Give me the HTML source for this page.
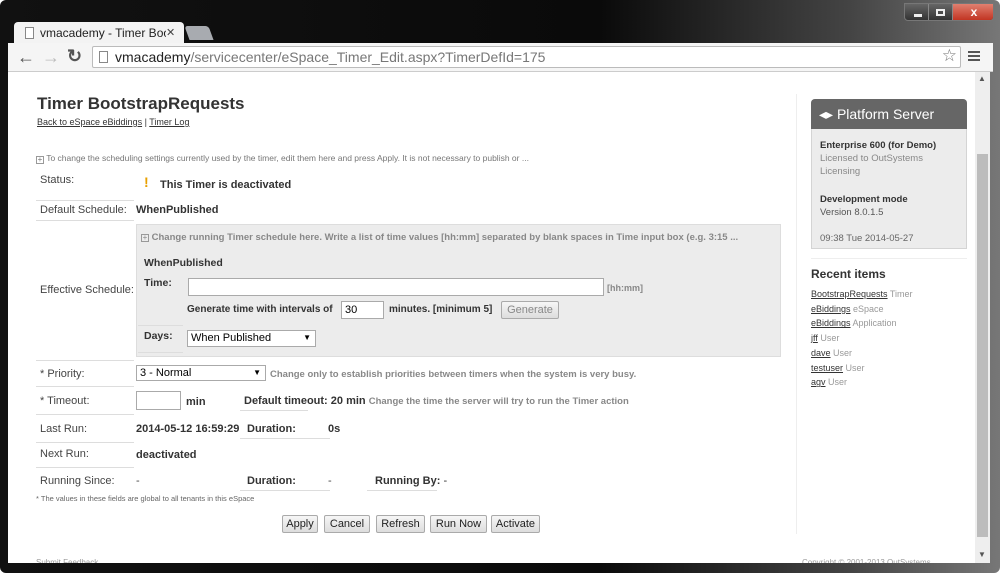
<!DOCTYPE html>
<html><head><style>
*{box-sizing:border-box;margin:0;padding:0}
body{width:1000px;height:573px;overflow:hidden;background:#fff;font-family:"Liberation Sans",Arial,sans-serif;position:relative}
.a{position:absolute}
.frame{left:0;top:0;width:1000px;height:573px;background:linear-gradient(90deg,#111 0,#0a0a0a 60%,#444 85%,#777 100%);border-radius:6px}
.lbl{font-size:11px;color:#444}
.b{font-weight:bold;font-size:11px;color:#333}
.line{height:1px;background:#ddd}
.btn{position:absolute;height:18px;border:1px solid #aaa;background:linear-gradient(#f6f6f6,#ddd);font-size:11px;color:#222;text-align:center;line-height:16px;border-radius:2px}
.inp{position:absolute;background:#fff;border:1px solid #aaa}
.u{text-decoration:underline;color:#333}
.g{color:#888}
</style></head><body>
<div class="a frame"></div>
<div class="a" style="left:904px;top:3px;width:90px;height:18px;border:1px solid #777;border-radius:0 0 4px 4px;background:linear-gradient(#666,#333);overflow:hidden">
 <div class="a" style="left:0;top:0;width:24px;height:17px;border-right:1px solid #888"></div>
 <div class="a" style="left:9px;top:10px;width:8px;height:3px;background:#eee"></div>
 <div class="a" style="left:24px;top:0;width:24px;height:17px;border-right:1px solid #888"></div>
 <div class="a" style="left:31px;top:5px;width:9px;height:7px;border:2px solid #eee"></div>
 <div class="a" style="left:48px;top:0;width:42px;height:17px;background:linear-gradient(#e08070,#c0301e);color:#fff;font-weight:bold;font-size:12px;text-align:center;line-height:17px">x</div>
</div>
<div class="a" style="left:14px;top:22px;width:170px;height:22px;background:#f3f3f3;border-radius:4px 4px 0 0;font-size:12px;color:#222;line-height:22px;padding-left:26px;overflow:hidden;white-space:nowrap">
 <div class="a" style="left:26px;top:0;width:126px;overflow:hidden">vmacademy - Timer Boots</div>
 <span style="position:absolute;left:152px;color:#444;font-size:11px">✕</span>
 <div class="a" style="left:11px;top:5px;width:9px;height:12px;border:1px solid #888;background:#fff"></div></div>
<div class="a" style="left:187px;top:26px;width:24px;height:14px;background:#a8abb0;border-radius:3px 3px 0 0;transform:skewX(20deg)"></div>
<div class="a" style="left:8px;top:43px;width:985px;height:29px;background:#f5f5f5;border-bottom:1px solid #ccc"></div>
<div class="a" style="left:17px;top:47px;font-size:18px;color:#555;font-weight:bold">←</div>
<div class="a" style="left:42px;top:47px;font-size:18px;color:#bbb;font-weight:bold">→</div>
<div class="a" style="left:67px;top:46px;font-size:18px;color:#555;font-weight:bold">↻</div>
<div class="a" style="left:92px;top:46px;width:869px;height:22px;background:#fff;border:1px solid #bbb;border-radius:2px;font-size:14px;line-height:20px;padding-left:22px;color:#777"><span style="color:#222">vmacademy</span>/servicecenter/eSpace_Timer_Edit.aspx?TimerDefId=175
 <div class="a" style="left:6px;top:4px;width:9px;height:12px;border:1px solid #888"></div>
 <div class="a" style="right:3px;top:-1px;font-size:17px;color:#777">☆</div></div>
<div class="a" style="left:968px;top:51px;width:12px;height:2px;background:#555;box-shadow:0 4px #555,0 8px #555"></div>
<div class="a" style="left:8px;top:72px;width:967px;height:491px;background:#fff;overflow:hidden">
 <div class="a" style="left:29px;top:22px;font-size:17px;font-weight:bold;color:#333">Timer BootstrapRequests</div>
 <div class="a" style="left:29px;top:45px;font-size:9px;color:#333"><span class="u">Back to eSpace eBiddings</span> | <span class="u">Timer Log</span></div>
 <div class="a" style="left:28px;top:81px;font-size:8.5px;color:#777"><span style="display:inline-block;width:8px;height:8px;border:1px solid #999;font-size:8px;line-height:6px;text-align:center;vertical-align:-1px">+</span> To change the scheduling settings currently used by the timer, edit them here and press Apply. It is not necessary to publish or ...</div>
 <div class="a lbl" style="left:32px;top:102px">Status:</div>
 <div class="a" style="left:136px;top:102px;color:#e8a000;font-weight:bold;font-size:14px">!</div>
 <div class="a b" style="left:152px;top:107px">This Timer is deactivated</div>
 <div class="a line" style="left:28px;top:128px;width:98px"></div>
 <div class="a lbl" style="left:32px;top:132px">Default Schedule:</div>
 <div class="a b" style="left:128px;top:132px">WhenPublished</div>
 <div class="a line" style="left:28px;top:148px;width:98px"></div>
 <div class="a" style="left:128px;top:152px;width:645px;height:133px;background:#ececec;border:1px solid #ddd"></div>
 <div class="a" style="left:133px;top:160px;font-size:9.5px;color:#888;font-weight:bold;white-space:nowrap"><span style="display:inline-block;width:8px;height:8px;border:1px solid #999;font-size:8px;line-height:6px;text-align:center;font-weight:normal">+</span> Change running Timer schedule here. Write a list of time values [hh:mm] separated by blank spaces in Time input box (e.g. 3:15 ...</div>
 <div class="a b" style="left:136px;top:185px;font-size:10.5px">WhenPublished</div>
 <div class="a lbl" style="left:32px;top:212px">Effective Schedule:</div>
 <div class="a b" style="left:136px;top:205px;font-size:10.5px">Time:</div>
 <div class="inp" style="left:180px;top:206px;width:416px;height:18px"></div>
 <div class="a" style="left:599px;top:211px;font-size:9px;color:#888;font-weight:bold">[hh:mm]</div>
 <div class="a b" style="left:179px;top:232px;font-size:10px;white-space:nowrap">Generate time with intervals of</div>
 <div class="inp" style="left:333px;top:229px;width:43px;height:18px;font-size:11px;padding:2px 3px">30</div>
 <div class="a b" style="left:381px;top:232px;font-size:10px;white-space:nowrap">minutes. [minimum 5]</div>
 <div class="btn" style="left:493px;top:229px;width:58px;color:#888">Generate</div>
 <div class="a line" style="left:130px;top:253px;width:45px"></div>
 <div class="a b" style="left:136px;top:258px;font-size:10.5px">Days:</div>
 <div class="inp" style="left:179px;top:258px;width:129px;height:17px;font-size:11px;padding:1px 3px">When Published<span style="position:absolute;right:4px;font-size:8px;top:2px">▼</span></div>
 <div class="a line" style="left:130px;top:280px;width:45px"></div>
 <div class="a line" style="left:28px;top:288px;width:98px"></div>
 <div class="a lbl" style="left:32px;top:296px">* Priority:</div>
 <div class="inp" style="left:128px;top:293px;width:130px;height:16px;font-size:11px;padding:1px 3px">3 - Normal<span style="position:absolute;right:4px;font-size:8px;top:2px">▼</span></div>
 <div class="a" style="left:262px;top:297px;font-size:9.5px;color:#888;font-weight:bold">Change only to establish priorities between timers when the system is very busy.</div>
 <div class="a line" style="left:28px;top:314px;width:98px"></div>
 <div class="a lbl" style="left:32px;top:323px">* Timeout:</div>
 <div class="inp" style="left:128px;top:319px;width:45px;height:19px"></div>
 <div class="a b" style="left:178px;top:324px">min</div>
 <div class="a b" style="left:236px;top:323px;white-space:nowrap">Default timeout: <span style="color:#333">20 min</span> <span style="color:#888;font-size:9.5px">Change the time the server will try to run the Timer action</span></div>
 <div class="a line" style="left:28px;top:342px;width:98px"></div>
 <div class="a line" style="left:232px;top:338px;width:68px"></div>
 <div class="a lbl" style="left:32px;top:351px">Last Run:</div>
 <div class="a b" style="left:128px;top:351px">2014-05-12 16:59:29</div>
 <div class="a b" style="left:239px;top:351px">Duration:</div>
 <div class="a b" style="left:320px;top:351px">0s</div>
 <div class="a line" style="left:232px;top:366px;width:90px"></div>
 <div class="a line" style="left:28px;top:370px;width:98px"></div>
 <div class="a lbl" style="left:32px;top:376px">Next Run:</div>
 <div class="a b" style="left:128px;top:377px">deactivated</div>
 <div class="a line" style="left:28px;top:395px;width:98px"></div>
 <div class="a lbl" style="left:32px;top:403px">Running Since:</div>
 <div class="a lbl" style="left:128px;top:403px">-</div>
 <div class="a b" style="left:239px;top:403px">Duration:</div>
 <div class="a lbl" style="left:320px;top:403px">-</div>
 <div class="a b" style="left:367px;top:403px">Running By: <span style="font-weight:normal">-</span></div>
 <div class="a line" style="left:232px;top:418px;width:90px"></div>
 <div class="a line" style="left:359px;top:418px;width:70px"></div>
 <div class="a" style="left:28px;top:422px;font-size:7.5px;color:#666">* The values in these fields are global to all tenants in this eSpace</div>
 <div class="btn" style="left:274px;top:443px;width:36px">Apply</div>
 <div class="btn" style="left:316px;top:443px;width:46px">Cancel</div>
 <div class="btn" style="left:368px;top:443px;width:49px">Refresh</div>
 <div class="btn" style="left:422px;top:443px;width:57px">Run Now</div>
 <div class="btn" style="left:483px;top:443px;width:49px">Activate</div>
 <div class="a" style="left:28px;top:486px;font-size:8px;color:#999">Submit Feedback</div>
 <div class="a" style="left:794px;top:486px;font-size:8px;color:#999">Copyright © 2001-2013 OutSystems</div>
 <div class="a" style="left:788px;top:22px;width:1px;height:440px;background:#eee"></div>
 <div class="a" style="left:803px;top:27px;width:156px;height:150px;background:#ececec;border:1px solid #d4d4d4;border-radius:4px 4px 0 0"></div>
 <div class="a" style="left:803px;top:27px;width:156px;height:30px;background:#666;border-radius:4px 4px 0 0;color:#fff;font-size:14px;line-height:30px;padding-left:8px">◂▸ Platform Server</div>
 <div class="a" style="left:812px;top:67px;font-size:9.5px;line-height:13px;color:#888"><b style="color:#333">Enterprise 600 (for Demo)</b><br>Licensed to OutSystems<br>Licensing</div>
 <div class="a" style="left:812px;top:121px;font-size:9.5px;line-height:13px;color:#555"><b style="color:#333">Development mode</b><br>Version 8.0.1.5</div>
 <div class="a" style="left:812px;top:161px;font-size:9.5px;color:#666">09:38 Tue 2014-05-27</div>
 <div class="a" style="left:803px;top:186px;width:156px;height:1px;background:#eee"></div>
 <div class="a" style="left:803px;top:195px;font-size:12px;font-weight:bold;color:#333">Recent items</div>
 <div class="a" style="left:803px;top:215px;font-size:9px;line-height:14.7px;color:#999">
  <span class="u">BootstrapRequests</span> Timer<br><span class="u">eBiddings</span> eSpace<br><span class="u">eBiddings</span> Application<br><span class="u">jff</span> User<br><span class="u">dave</span> User<br><span class="u">testuser</span> User<br><span class="u">agv</span> User</div>
</div>
<div class="a" style="left:975px;top:72px;width:15px;height:491px;background:#eee"></div>
<div class="a" style="left:978px;top:74px;font-size:8px;color:#555">▲</div>
<div class="a" style="left:977px;top:154px;width:11px;height:383px;background:#bcbcbc"></div>
<div class="a" style="left:978px;top:550px;font-size:8px;color:#555">▼</div>
</body></html>
